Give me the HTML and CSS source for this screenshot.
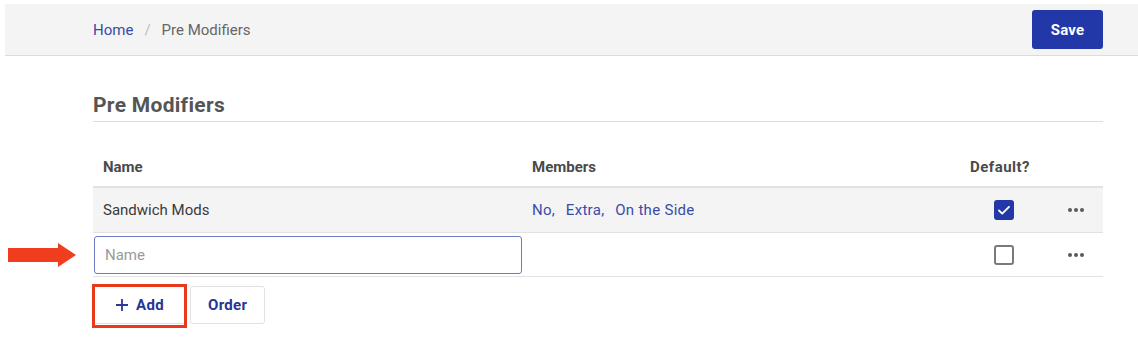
FILE: index.html
```html
<!DOCTYPE html>
<html lang="en">
<head>
<meta charset="utf-8">
<title>Pre Modifiers</title>
<link rel="stylesheet" href="styles.css">
</head>
<body>
<div class="page">
  <header class="topbar">
    <nav class="crumbs">
      <a class="crumb-link" href="#">Home</a>
      <span class="crumb-sep">/</span>
      <span class="crumb-current">Pre Modifiers</span>
    </nav>
    <button class="btn-save" type="button">Save</button>
  </header>

  <main class="content">
    <h1 class="title">Pre Modifiers</h1>

    <div class="table">
      <div class="row row-head">
        <div class="cell cell-name">Name</div>
        <div class="cell cell-members">Members</div>
        <div class="cell cell-default head-default">Default?</div>
        <div class="cell cell-more"></div>
      </div>

      <div class="row row-shaded">
        <div class="cell cell-name">Sandwich Mods</div>
        <div class="cell cell-members">
          <a class="member" href="#">No,</a>
          <a class="member" href="#">Extra,</a>
          <a class="member" href="#">On the Side</a>
        </div>
        <div class="cell cell-default"><span class="check check-on"><svg viewBox="0 0 20 20" width="20" height="20"><path d="M5 10.5l3.2 3.2L15 6.8" fill="none" stroke="#fff" stroke-width="1.8" stroke-linecap="round" stroke-linejoin="round"/></svg></span></div>
        <div class="cell cell-more"><span class="dots"><i></i><i></i><i></i></span></div>
      </div>

      <div class="row row-new">
        <svg class="arrow" viewBox="0 0 68 24" width="68" height="24"><polygon points="0,5 50,5 50,0 68,12 50,24 50,19 0,19" fill="#ef3d1d"/></svg>
        <div class="cell cell-input"><input class="name-input" type="text" placeholder="Name"></div>
        <div class="cell cell-members"></div>
        <div class="cell cell-default"><span class="check"></span></div>
        <div class="cell cell-more"><span class="dots"><i></i><i></i><i></i></span></div>
      </div>
    </div>

    <div class="actions">
      <button class="btn btn-add" type="button"><svg class="plus" viewBox="0 0 14 14" width="14" height="14"><path d="M7 1v12M1 7h12" stroke="#2b3990" stroke-width="1.8" fill="none"/></svg>Add</button>
      <button class="btn" type="button">Order</button>
    </div>
  </main>
</div>
</body>
</html>
```

FILE: styles.css
```css
* { box-sizing: border-box; }

html, body {
  margin: 0;
  padding: 0;
  background: #ffffff;
}

body {
  font-family: Roboto, "Liberation Sans", Arial, sans-serif;
  color: #3a3a3a;
  width: 1138px;
  height: 341px;
  overflow: hidden;
}

.topbar {
  margin: 4px 0 0 5px;
  height: 52px;
  background: #f4f4f5;
  border-bottom: 1px solid #dcdcdc;
  display: flex;
  align-items: center;
  justify-content: space-between;
  padding: 0 35px 0 88px;
}

.crumbs {
  display: flex;
  align-items: center;
  gap: 11px;
  font-size: 15px;
}

.crumb-link {
  color: #3a4ba6;
  text-decoration: none;
}

.crumb-sep {
  color: #bdbdbd;
}

.crumb-current {
  color: #666666;
}

.btn-save {
  width: 71px;
  height: 39px;
  border: none;
  border-radius: 3px;
  background: #2237a8;
  color: #ffffff;
  font-family: inherit;
  font-weight: 700;
  font-size: 15px;
  letter-spacing: 0.2px;
}

.content {
  padding: 0 35px 0 93px;
}

.title {
  margin: 36px 0 0;
  padding-bottom: 3px;
  font-size: 21px;
  line-height: 26px;
  font-weight: 700;
  letter-spacing: 0.3px;
  color: #555555;
  border-bottom: 1px solid #dddddd;
}

.table {
  margin-top: 28px;
}

.row {
  display: grid;
  grid-template-columns: 429px 438px 88px 55px;
  align-items: center;
  position: relative;
}

.row-head {
  height: 38px;
  padding-bottom: 2px;
  border-bottom: 2px solid #e2e2e2;
  font-weight: 700;
  font-size: 15px;
  color: #4a4a4a;
}

.head-default {
  padding-right: 8px;
  letter-spacing: 0.5px;
}

.row-shaded {
  height: 45px;
  background: #f4f4f5;
  border-bottom: 1px solid #e2e2e2;
  font-size: 15px;
  color: #3a3a3a;
}

.row-new {
  height: 44px;
  border-bottom: 1px solid #e2e2e2;
}

.cell-name,
.cell-members {
  padding-left: 10px;
}

.cell-input {
  padding-left: 1px;
}

.cell-default,
.cell-more {
  display: flex;
  justify-content: center;
}

.member {
  color: #3a4ba6;
  text-decoration: none;
  margin-right: 7px;
  letter-spacing: 0.3px;
}

.check {
  width: 20px;
  height: 20px;
  border: 2px solid #7a7a7a;
  border-radius: 3px;
  background: #ffffff;
  display: block;
}

.check-on {
  border: none;
  background: #2237a8;
}

.check-on svg { display: block; }

.dots {
  display: flex;
  gap: 2px;
}

.dots i {
  width: 4px;
  height: 4px;
  border-radius: 50%;
  background: #5a5a5a;
}

.name-input {
  display: block;
  width: 428px;
  height: 38px;
  border: 1px solid #6f7bc2;
  border-radius: 3px;
  padding: 0 10px;
  font-family: inherit;
  font-size: 15px;
  color: #333333;
  outline: none;
}

.name-input::placeholder {
  color: #9a9a9a;
}

.arrow {
  position: absolute;
  left: -85px;
  top: 10px;
}

.actions {
  margin-top: 9px;
  display: flex;
  gap: 4px;
}

.btn {
  height: 38px;
  padding: 0 17px;
  border: 1px solid #e2e2e2;
  border-radius: 3px;
  background: #ffffff;
  color: #283593;
  font-family: inherit;
  font-weight: 700;
  font-size: 15px;
  letter-spacing: 0.3px;
  display: flex;
  align-items: center;
  gap: 7px;
  position: relative;
}

.btn-add {
  width: 93px;
  justify-content: center;
}

.btn-add::after {
  content: "";
  position: absolute;
  left: -2px;
  top: -3px;
  right: -2px;
  bottom: -5px;
  border: 3px solid #e8391d;
}

.plus { display: block; }
```
